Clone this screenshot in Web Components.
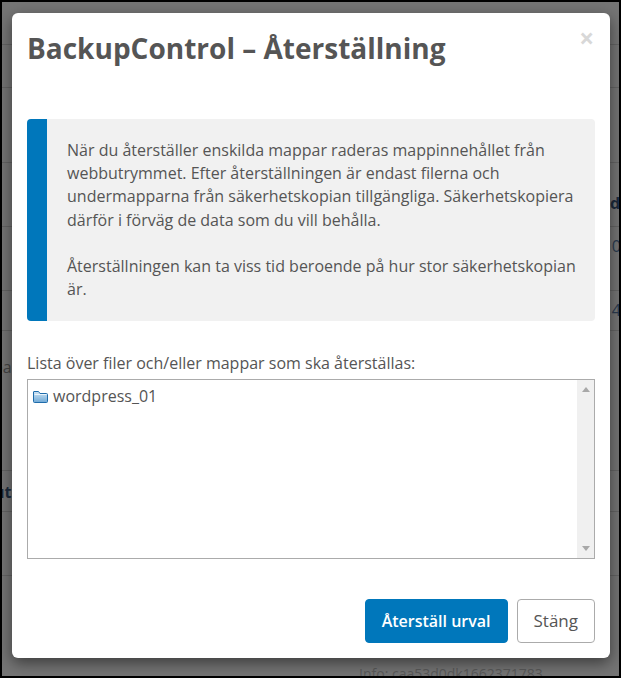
<!DOCTYPE html>
<html lang="sv">
<head>
<meta charset="utf-8">
<title>BackupControl</title>
<style>
  html, body { margin: 0; padding: 0; background: #000; }
  body { font-family: "Open Sans", "Liberation Sans", sans-serif; }
</style>
</head>
<body>
<backup-screen>
  <backup-dialog heading="BackupControl – Återställning">
    <info-note>
      <p>När du återställer enskilda mappar raderas mappinnehållet från webbutrymmet. Efter återställningen är endast filerna och undermapparna från säkerhetskopian tillgängliga. Säkerhetskopiera därför i förväg de data som du vill behålla.</p>
      <p>Återställningen kan ta viss tid beroende på hur stor säkerhetskopian är.</p>
    </info-note>
    <file-list label="Lista över filer och/eller mappar som ska återställas:">
      <folder-item>wordpress_01</folder-item>
    </file-list>
    <dialog-button slot="actions" kind="primary">Återställ urval</dialog-button>
    <dialog-button slot="actions">Stäng</dialog-button>
  </backup-dialog>
</backup-screen>

<script>
class BackupScreen extends HTMLElement {
  constructor() {
    super();
    this.attachShadow({ mode: 'open' });
    this.shadowRoot.innerHTML = `
      <style>
        :host {
          display: block;
          box-sizing: border-box;
          width: 621px;
          height: 678px;
          border: 2px solid #000;
          position: relative;
          overflow: hidden;
          background: #757575;
        }
        .back {
          position: absolute;
          inset: 0;
          color: #2b3b50;
          font-size: 16px;
        }
        .row {
          border-bottom: 1px solid #646464;
          display: flex;
          justify-content: space-between;
          align-items: flex-start;
          box-sizing: border-box;
          line-height: 20px;
        }
        .row b { font-weight: 700; color: #1c2a3c; }
        .info {
          position: absolute;
          left: 357px;
          top: 662px;
          color: #5a5a5a;
          font-size: 14px;
          line-height: 20px;
          white-space: nowrap;
        }
        .front {
          position: relative;
          padding: 11px 9px 0 10px;
        }
      </style>
      <div class="back">
        <div class="row" style="height:43px"></div>
        <div class="row" style="height:43px"></div>
        <div class="row" style="height:75px"></div>
        <div class="row" style="height:64px;padding-top:30px"><span></span><span style="margin-right:-1px"><b>d</b></span></div>
        <div class="row" style="height:64px;padding-top:9px"><span></span><span style="margin-right:-2px">0</span></div>
        <div class="row" style="height:40px;padding-top:9px"><span></span><span style="margin-right:-2px">4</span></div>
        <div class="row" style="height:140px;padding-top:26px"><span style="margin-left:-9px;color:#444">pa</span><span></span></div>
        <div class="row" style="height:41px;padding-top:11px"><span style="margin-left:-8px"><b>ut</b></span><span></span></div>
        <div class="row" style="height:64px"></div>
      </div>
      <div class="info">Info: caa53d0dk1662371783</div>
      <div class="front"><slot></slot></div>
    `;
  }
}

class BackupDialog extends HTMLElement {
  constructor() {
    super();
    this.attachShadow({ mode: 'open' });
    this.shadowRoot.innerHTML = `
      <style>
        :host {
          display: block;
          box-sizing: border-box;
          width: 598px;
          height: 645px;
          background: #fff;
          border-radius: 6px;
          box-shadow: 0 5px 15px rgba(0, 0, 0, .5);
          position: relative;
          color: #555;
        }
        header {
          padding: 15px 15px 0;
          height: 91px;
          box-sizing: border-box;
        }
        h1 {
          margin: 0;
          font-size: 28px;
          line-height: 40px;
          font-weight: 700;
          color: #555;
        }
        .close {
          position: absolute;
          top: 10px;
          right: 16px;
          font-size: 26px;
          line-height: 30px;
          font-weight: 700;
          color: #d8d8d8;
        }
        .body { padding: 15px 15px 0; }
        footer {
          display: flex;
          justify-content: flex-end;
          gap: 9px;
          padding: 40px 15px 0;
        }
      </style>
      <header>
        <h1 id="heading"></h1>
        <span class="close">×</span>
      </header>
      <div class="body"><slot></slot></div>
      <footer><slot name="actions"></slot></footer>
    `;
  }

  connectedCallback() {
    this.shadowRoot.querySelector('#heading').textContent = this.getAttribute('heading');
  }
}

class InfoNote extends HTMLElement {
  constructor() {
    super();
    this.attachShadow({ mode: 'open' });
    this.shadowRoot.innerHTML = `
      <style>
        :host {
          display: block;
          box-sizing: border-box;
          height: 202px;
          background: #f1f1f1;
          border-left: 20px solid #0077bb;
          border-radius: 4px;
          padding: 20px 16px 0 20px;
          font-size: 16px;
          line-height: 23.2px;
          color: #555;
        }
        ::slotted(p) { margin: 0 0 23.2px; }
        ::slotted(p:last-child) { margin-bottom: 0; }
      </style>
      <slot></slot>
    `;
  }
}

class FileList extends HTMLElement {
  constructor() {
    super();
    this.attachShadow({ mode: 'open' });
    this.shadowRoot.innerHTML = `
      <style>
        :host {
          display: block;
          margin-top: 30px;
          font-size: 16px;
          color: #555;
        }
        label {
          display: block;
          line-height: 24px;
          margin-bottom: 4px;
        }
        .box {
          box-sizing: border-box;
          height: 180px;
          border: 1px solid #ababab;
          display: flex;
        }
        .items {
          flex: 1;
          padding: 4px 5px;
        }
        .bar {
          width: 17px;
          background: #f0f0f0;
          display: flex;
          flex-direction: column;
          justify-content: space-between;
          align-items: center;
          padding: 7px 0;
        }
        .bar svg { display: block; }
      </style>
      <label id="label"></label>
      <div class="box">
        <div class="items"><slot></slot></div>
        <div class="bar">
          <svg width="8" height="5" viewBox="0 0 8 5"><path d="M4 0 L8 5 L0 5 Z" fill="#a8a8a8"/></svg>
          <svg width="8" height="5" viewBox="0 0 8 5"><path d="M0 0 L8 0 L4 5 Z" fill="#a8a8a8"/></svg>
        </div>
      </div>
    `;
  }

  connectedCallback() {
    this.shadowRoot.querySelector('#label').textContent = this.getAttribute('label');
  }
}

class FolderItem extends HTMLElement {
  constructor() {
    super();
    this.attachShadow({ mode: 'open' });
    this.shadowRoot.innerHTML = `
      <style>
        :host {
          display: flex;
          align-items: center;
          gap: 5px;
          line-height: 24px;
        }
        svg { display: block; margin-top: 1px; }
      </style>
      <svg width="15" height="13" viewBox="0 0 15 13">
        <defs>
          <linearGradient id="fill" x1="0" y1="0" x2="0" y2="1">
            <stop offset="0" stop-color="#cfe4f4"/>
            <stop offset="1" stop-color="#6fa9d6"/>
          </linearGradient>
        </defs>
        <path d="M.5 11.5 V2 Q.5 1.5 1 1.5 H5.5 L7 3.5 H13.5 Q14.5 3.5 14.5 4.5 V11.5 Q14.5 12.5 13.5 12.5 H1.5 Q.5 12.5 .5 11.5 Z" fill="url(#fill)" stroke="#1f6cab"/>
        <path d="M1.5 4.5 H13.5" stroke="#eaf4fb" stroke-width="1"/>
      </svg>
      <span><slot></slot></span>
    `;
  }
}

class DialogButton extends HTMLElement {
  constructor() {
    super();
    this.attachShadow({ mode: 'open' });
    this.shadowRoot.innerHTML = `
      <style>
        :host {
          display: block;
          box-sizing: border-box;
          height: 44px;
          padding: 0 16px;
          border: 1px solid #ababab;
          border-radius: 4px;
          background: #fff;
          color: #555;
          font-size: 17px;
          line-height: 42px;
          white-space: nowrap;
        }
        :host([kind="primary"]) {
          background: #0077bb;
          border-color: #0077bb;
          color: #fff;
          font-size: 16px;
          font-weight: 600;
        }
      </style>
      <slot></slot>
    `;
  }
}

customElements.define('backup-screen', BackupScreen);
customElements.define('backup-dialog', BackupDialog);
customElements.define('info-note', InfoNote);
customElements.define('file-list', FileList);
customElements.define('folder-item', FolderItem);
customElements.define('dialog-button', DialogButton);
</script>
</body>
</html>
